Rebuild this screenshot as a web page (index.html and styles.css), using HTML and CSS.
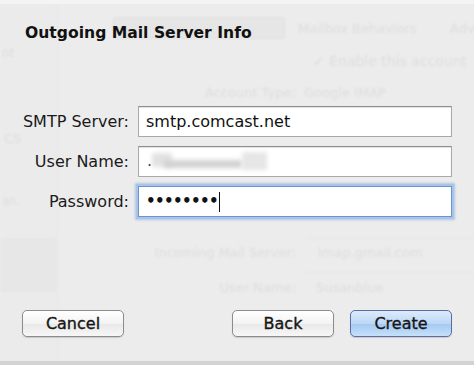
FILE: index.html
```html
<!DOCTYPE html>
<html>
<head>
<meta charset="utf-8">
<link rel="stylesheet" href="styles.css">
</head>
<body>
<div class="window">
  <div class="ghost" aria-hidden="true">
    <div class="g-sidebar"></div>
    <div class="g-sidebar-sel"></div>
    <div class="g-tab"></div>
    <div class="g-text g-tab2">Mailbox Behaviors</div>
    <div class="g-text g-tab3">Adv</div>
    <div class="g-text g-enable">✓ Enable this account</div>
    <div class="g-text g-type">Account Type:&nbsp;&nbsp;Google IMAP</div>
    <div class="g-line g-line1"></div>
    <div class="g-line g-line2"></div>
    <div class="g-text g-inc">Incoming Mail Server:</div>
    <div class="g-text g-incv">imap.gmail.com</div>
    <div class="g-text g-un">User Name:</div>
    <div class="g-text g-unv">Susanblue</div>
    <div class="g-text g-s1">nt</div>
    <div class="g-text g-s2">CS</div>
    <div class="g-text g-s3">an.</div>
  </div>

  <div class="sheet">
    <h1 class="title">Outgoing Mail Server Info</h1>
    <div class="form">
      <label class="label">SMTP Server:</label>
      <div class="field">smtp.comcast.net</div>
      <label class="label">User Name:</label>
      <div class="field">
        <span class="blur-wrap">
          <span class="dot">.</span>
          <span class="blur b1"></span>
          <span class="blur b2"></span>
          <span class="blur b3"></span>
        </span>
      </div>
      <label class="label">Password:</label>
      <div class="field focused"><span class="dots">••••••••</span><span class="caret"></span></div>
    </div>
    <div class="buttons">
      <button class="btn">Cancel</button>
      <div class="spacer"></div>
      <button class="btn">Back</button>
      <button class="btn primary">Create</button>
    </div>
  </div>
  <div class="bottom-strip"></div>
</div>
</body>
</html>
```

FILE: styles.css
```css
* { box-sizing: border-box; }
html, body { margin: 0; padding: 0; }
body {
  width: 474px;
  height: 365px;
  overflow: hidden;
  font-family: "DejaVu Sans", "Liberation Sans", sans-serif;
  color: #1a1a1a;
}
.window {
  position: relative;
  width: 474px;
  height: 365px;
  background: #ececec;
  border-top: 4px solid #f4f4f4;
  overflow: hidden;
}
.bottom-strip {
  position: absolute;
  left: 0; right: 0; bottom: 0;
  height: 4px;
  background: #d3d3d3;
}

/* faint window underneath the sheet */
.ghost { position: absolute; inset: 0; filter: blur(0.9px); }
.g-sidebar {
  position: absolute; left: 0; top: 0; bottom: 0; width: 58px;
  border-right: 1px solid #e5e5e5;
  background: #ebebeb;
}
.g-sidebar-sel {
  position: absolute; left: 0; top: 234px; width: 58px; height: 54px;
  background: #e7e7e7;
}
.g-tab {
  position: absolute; left: 113px; top: 13px; width: 172px; height: 22px;
  background: #e6e6e6; border: 1px solid #e0e0e0; border-radius: 3px;
}
.g-text {
  position: absolute;
  font-size: 13px;
  color: #dddddd;
  white-space: nowrap;
}
.g-tab2 { left: 298px; top: 17px; }
.g-tab3 { left: 450px; top: 17px; }
.g-enable { left: 313px; top: 49px; font-size: 14px; }
.g-type { left: 205px; top: 81px; }
.g-line { position: absolute; height: 1px; background: #e3e3e3; left: 306px; right: 0; }
.g-line1 { top: 234px; }
.g-line2 { top: 268px; }
.g-inc { right: 178px; top: 241px; }
.g-incv { left: 318px; top: 241px; }
.g-un { right: 178px; top: 276px; }
.g-unv { left: 316px; top: 276px; }
.g-s1 { left: 2px; top: 42px; font-size: 12px; }
.g-s2 { left: 4px; top: 127px; }
.g-s3 { left: 2px; top: 190px; font-size: 12px; }

/* sheet content */
.sheet {
  position: relative;
  display: flex;
  flex-direction: column;
  height: 357px;
  padding: 0 22px 0 22px;
}
.title {
  margin: 20px 0 0 3px;
  font-size: 15.6px;
  font-weight: bold;
  line-height: 18px;
  color: #111;
}
.form {
  margin-top: 64px;
  display: grid;
  grid-template-columns: 107px 314px;
  column-gap: 9px;
  row-gap: 9px;
  align-items: center;
}
.label {
  text-align: right;
  font-size: 16px;
  color: #1a1a1a;
}
.field {
  position: relative;
  height: 31px;
  background: #fff;
  border: 1px solid #a9a9a9;
  border-top-color: #8e8e8e;
  box-shadow: inset 0 1px 1px rgba(0,0,0,0.12);
  font-size: 16px;
  line-height: 29px;
  padding-left: 7px;
  display: flex;
  align-items: center;
  color: #111;
}
.field.focused {
  border-color: #6b94c9;
  box-shadow: 0 0 0 2px #a7c4ea, 0 0 2px 3px rgba(120,160,220,0.5);
}
.dots { font-size: 15px; font-weight: bold; letter-spacing: -0.6px; }
.caret {
  display: inline-block;
  width: 1px;
  height: 20px;
  background: #111;
  margin-left: 1px;
}
.blur-wrap { position: relative; display: inline-block; width: 125px; height: 24px; }
.dot { position: absolute; left: 1px; top: -4px; font-size: 16px; color: #333; }
.blur { position: absolute; filter: blur(2px); background: #cfcfcf; }
.b1 { left: 6px; top: 3px; width: 20px; height: 14px; background: #e2e2e2; }
.b2 { left: 18px; top: 10px; width: 78px; height: 8px; background: #d2d2d2; }
.b3 { left: 96px; top: 2px; width: 25px; height: 18px; background: #e6e6e6; }

.buttons {
  margin-top: auto;
  margin-bottom: 24px;
  display: flex;
  align-items: center;
}
.spacer { flex: 1; }
.btn {
  width: 102px;
  height: 27px;
  font-family: "DejaVu Sans", "Liberation Sans", sans-serif;
  font-size: 16px;
  color: #161616;
  -webkit-text-stroke: 0.35px #161616;
  background: linear-gradient(#ffffff, #f3f3f3 50%, #e8e8e8 51%, #f7f7f7);
  border: 1px solid #8c8c8c;
  border-radius: 5px;
  box-shadow: 0 1px 1px rgba(0,0,0,0.15);
  padding: 0;
}
.btn + .btn { margin-left: 16px; }
.btn.primary {
  background: linear-gradient(#dcebfb, #bcd8f6 50%, #a3c9f1 51%, #c6e0fa);
  border-color: #5a6ea3;
}
```
